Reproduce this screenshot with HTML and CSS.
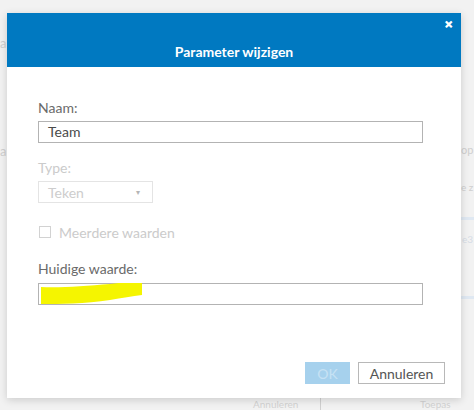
FILE: index.html
```html
<!DOCTYPE html>
<html lang="nl">
<head>
<meta charset="utf-8">
<title>Parameter wijzigen</title>
<link rel="stylesheet" href="styles.css">
</head>
<body>
<div class="backdrop">
  <span class="bg-text bg-ca">a</span>
  <span class="bg-text bg-ea">a</span>
  <span class="bg-text bg-op">op</span>
  <span class="bg-text bg-ez">e z</span>
  <span class="bg-line bg-l1"></span>
  <span class="bg-text bg-e3">e3</span>
  <span class="bg-line bg-l2"></span>
  <span class="bg-text bg-mm">Annuleren</span>
  <span class="bg-vline"></span>
  <span class="bg-text bg-pp">Toepas</span>
</div>
<div class="page">
  <div class="dialog">
    <div class="dialog-header">
      <h1 class="dialog-title">Parameter wijzigen</h1>
      <span class="close">&#x2715;</span>
    </div>
    <div class="dialog-body">
      <label class="field-label">Naam:</label>
      <div class="text-input">Team</div>
      <label class="field-label disabled gap-type">Type:</label>
      <div class="select disabled-box">
        <span>Teken</span>
        <span class="caret">&#9662;</span>
      </div>
      <div class="check-row">
        <span class="checkbox"></span>
        <span class="check-label">Meerdere waarden</span>
      </div>
      <label class="field-label gap-current">Huidige waarde:</label>
      <div class="text-input value-input">
        <svg class="marker" width="104" height="22" viewBox="0 0 104 22">
          <path d="M1 4 C20 5 45 3 70 1 C85 -1 95 -1 102 -1 L102 12 C92 13 82 15 70 17 C45 21 20 21 1 21 Z" fill="#f5f500"/>
        </svg>
      </div>
    </div>
    <div class="dialog-footer">
      <button class="btn btn-ok">OK</button>
      <button class="btn btn-cancel">Annuleren</button>
    </div>
  </div>
</div>
</body>
</html>
```

FILE: styles.css
```css
html, body {
  margin: 0;
  padding: 0;
}
body {
  width: 474px;
  height: 410px;
  overflow: hidden;
  background: #efefef;
  font-family: Lato, "Open Sans", sans-serif;
  position: relative;
}
.backdrop {
  position: absolute;
  inset: 0;
  background: #f2f2f2;
}
.bg-text {
  position: absolute;
  font-size: 13px;
  line-height: 14px;
  color: #cfcfcf;
  white-space: nowrap;
}
.bg-ca { left: 0; top: 36px; }
.bg-ea { left: 0; top: 144px; }
.bg-op { left: 461px; top: 143px; font-size: 11px; }
.bg-ez { left: 461px; top: 180px; font-size: 10px; }
.bg-e3 { left: 462px; top: 232px; font-size: 10px; color: #d6dde6; }
.bg-line {
  position: absolute;
  left: 461px;
  width: 13px;
  height: 3px;
  background: #dfe8f2;
}
.bg-l1 { top: 217px; }
.bg-l2 { top: 296px; }
.bg-mm { left: 253px; top: 398px; font-size: 10px; line-height: 12px; color: #d3d3d3; }
.bg-vline {
  position: absolute;
  left: 320px;
  top: 398px;
  width: 1px;
  height: 12px;
  background: #d0d0d0;
}
.bg-pp { left: 420px; top: 398px; font-size: 10px; line-height: 12px; color: #d3d3d3; }

.page {
  position: relative;
  padding: 13px 0 0 7px;
}
.dialog {
  width: 454px;
  height: 385px;
  background: #fff;
  box-shadow: 0 2px 8px rgba(0,0,0,0.16);
  display: flex;
  flex-direction: column;
}
.dialog-header {
  position: relative;
  height: 54px;
  background: #0079c1;
  box-sizing: border-box;
  padding-top: 29px;
}
.dialog-title {
  margin: 0;
  text-align: center;
  color: #fff;
  font-size: 14px;
  font-weight: 700;
  line-height: 20px;
}
.close {
  position: absolute;
  right: 8px;
  top: 6px;
  color: #fff;
  font-size: 10px;
  font-weight: 700;
  font-family: "DejaVu Sans", sans-serif;
  -webkit-text-stroke: 1px #fff;
}
.dialog-body {
  padding: 31px 38px 0 31px;
  display: flex;
  flex-direction: column;
  align-items: flex-start;
}
.field-label {
  font-size: 14px;
  line-height: 20px;
  color: #6a6a6a;
}
.field-label.disabled { color: #cbcbcb; }
.gap-type { margin-top: 15px; }
.gap-current { margin-top: 17px; }
.text-input {
  margin-top: 3px;
  width: 385px;
  height: 22px;
  box-sizing: border-box;
  border: 1px solid #b3b3b3;
  font-size: 14px;
  line-height: 20px;
  padding-left: 9px;
  color: #4a4a4a;
}
.value-input {
  margin-top: 4px;
  padding-left: 1px;
  position: relative;
}
.marker {
  display: block;
  margin-top: -1px;
}
.select {
  margin-top: 3px;
  width: 115px;
  height: 22px;
  box-sizing: border-box;
  border: 1px solid #e4e4e4;
  display: flex;
  align-items: center;
  justify-content: space-between;
  padding: 0 12px 0 9px;
  font-size: 14px;
  color: #cdcdcd;
}
.caret {
  font-size: 8px;
  color: #b5b5b5;
}
.check-row {
  margin-top: 19px;
  height: 20px;
  display: flex;
  align-items: center;
}
.checkbox {
  width: 12px;
  height: 12px;
  box-sizing: border-box;
  border: 1px solid #d2d2d2;
  margin-left: 1px;
  margin-right: 8px;
}
.check-label {
  font-size: 14px;
  color: #cbcbcb;
}
.dialog-footer {
  margin-top: auto;
  padding: 0 16px 14px 0;
  display: flex;
  justify-content: flex-end;
  gap: 8px;
}
.btn {
  height: 22px;
  box-sizing: border-box;
  font-family: Lato, "Open Sans", sans-serif;
  font-size: 14px;
  padding: 0;
  margin: 0;
}
.btn-ok {
  width: 45px;
  background: #a6d1ed;
  border: 1px solid #a6d1ed;
  color: #c6e2f4;
}
.btn-cancel {
  width: 87px;
  background: #fff;
  border: 1px solid #b8b8b8;
  color: #555;
}
```
